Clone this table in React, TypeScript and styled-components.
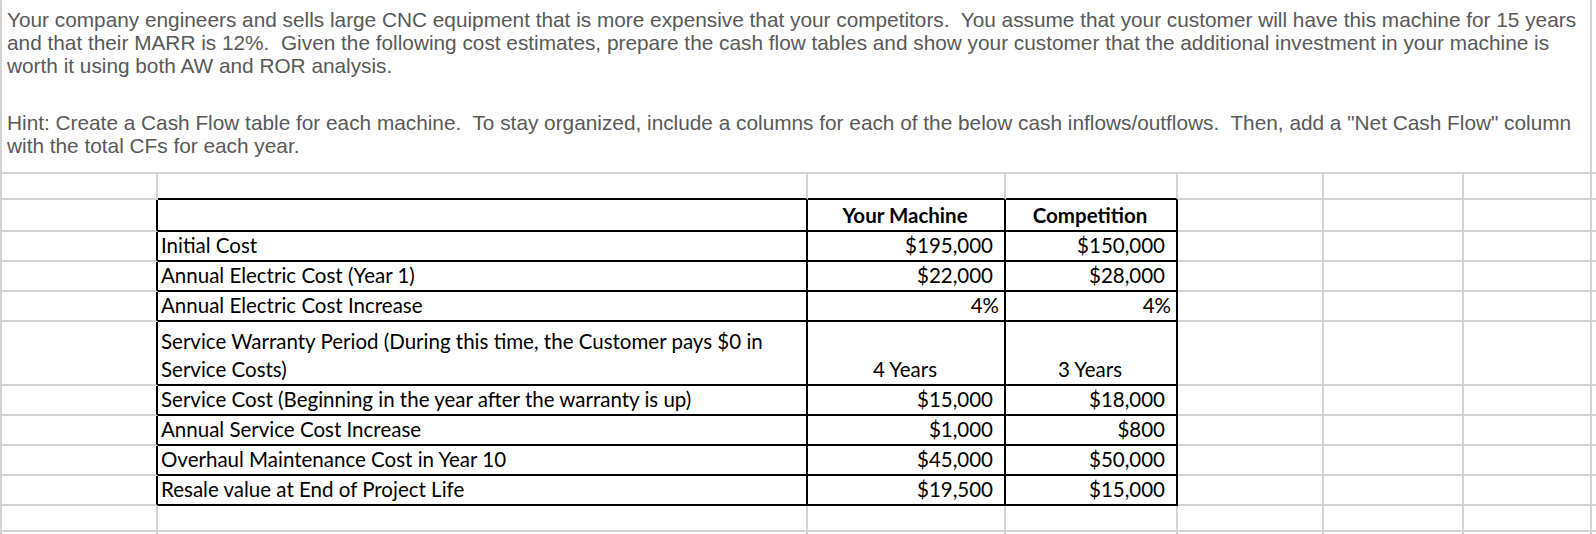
import React from "react";
import styled, { createGlobalStyle } from "styled-components";

const GRID = "#d4d4d4";
const INK = "#000000";

const COLS = [156, 650, 198, 172, 146, 140, 128];
const ROWS = [174, 26, 32, 30, 30, 30, 64, 30, 30, 30, 30, 26, 30];

const GlobalStyle = createGlobalStyle`
  html, body {
    margin: 0;
    padding: 0;
    background: #ffffff;
    overflow: hidden;
  }
`;

const Sheet = styled.div`
  display: grid;
  grid-template-columns: ${COLS.map((w) => `${w}px`).join(" ")} 1fr;
  grid-template-rows: ${ROWS.map((h) => `${h}px`).join(" ")};
  width: 1596px;
  height: 534px;
  overflow: hidden;
  box-sizing: border-box;
  border-left: 2px solid ${GRID};
`;

const Note = styled.div`
  grid-column: 1 / 8;
  box-sizing: border-box;
  border-right: 2px solid ${GRID};
  border-bottom: 2px solid ${GRID};
  padding: 8px 0 0 5px;
  font-family: "Liberation Sans", Arial, sans-serif;
  font-size: 20.8px;
  line-height: 23px;
  color: #595959;
  white-space: pre;
  overflow: hidden;
`;

const Para = styled.p<{ $gap?: number }>`
  margin: ${(p) => p.$gap ?? 0}px 0 0;
`;

type Align = "left" | "right" | "center";

const Cell = styled.div<{
  $right?: boolean;
  $bottom?: boolean;
  $align?: Align;
  $pad?: number;
  $bold?: boolean;
}>`
  box-sizing: border-box;
  border-right: 2px solid ${(p) => (p.$right ? INK : GRID)};
  border-bottom: 2px solid ${(p) => (p.$bottom ? INK : GRID)};
  display: flex;
  align-items: flex-end;
  justify-content: ${(p) =>
    p.$align === "right"
      ? "flex-end"
      : p.$align === "center"
      ? "center"
      : "flex-start"};
  padding: 0 ${(p) => p.$pad ?? 5}px 1px 3px;
  font-family: Lato, "Noto Sans", sans-serif;
  font-size: 20.5px;
  line-height: 28px;
  font-weight: ${(p) => (p.$bold ? 700 : 400)};
  color: #000000;
  white-space: nowrap;
  overflow: hidden;
`;

const Value = styled.span`
  display: block;
`;

type Kind = "head" | "money" | "pct" | "text";

const TABLE: { label: string[]; a: string; b: string; kind: Kind }[] = [
  { label: [], a: "Your Machine", b: "Competition", kind: "head" },
  { label: ["Initial Cost"], a: "$195,000", b: "$150,000", kind: "money" },
  { label: ["Annual Electric Cost (Year 1)"], a: "$22,000", b: "$28,000", kind: "money" },
  { label: ["Annual Electric Cost Increase"], a: "4%", b: "4%", kind: "pct" },
  {
    label: [
      "Service Warranty Period (During this time, the Customer pays $0 in",
      "Service Costs)",
    ],
    a: "4 Years",
    b: "3 Years",
    kind: "text",
  },
  {
    label: ["Service Cost (Beginning in the year after the warranty is up)"],
    a: "$15,000",
    b: "$18,000",
    kind: "money",
  },
  { label: ["Annual Service Cost Increase"], a: "$1,000", b: "$800", kind: "money" },
  { label: ["Overhaul Maintenance Cost in Year 10"], a: "$45,000", b: "$50,000", kind: "money" },
  { label: ["Resale value at End of Project Life"], a: "$19,500", b: "$15,000", kind: "money" },
];

const FIRST_TABLE_ROW = 2;

function valueProps(kind: Kind) {
  switch (kind) {
    case "head":
      return { $align: "center" as Align, $bold: true };
    case "money":
      return { $align: "right" as Align, $pad: 11 };
    case "pct":
      return { $align: "right" as Align, $pad: 5 };
    default:
      return { $align: "center" as Align };
  }
}

function SheetRow({ r }: { r: number }) {
  const t = r - FIRST_TABLE_ROW;
  const inTable = t >= 0 && t < TABLE.length;
  const entry = inTable ? TABLE[t] : null;

  return (
    <>
      {Array.from({ length: COLS.length + 1 }, (_, c) => {
        const right = inTable && c <= 3;
        const bottom = (inTable || r === FIRST_TABLE_ROW - 1) && c >= 1 && c <= 3;
        let content: React.ReactNode = null;
        let extra = {};

        if (entry && c === 1) {
          content = (
            <Value>
              {entry.label.map((line, i) => (
                <React.Fragment key={i}>
                  {i > 0 && <br />}
                  {line}
                </React.Fragment>
              ))}
            </Value>
          );
        } else if (entry && (c === 2 || c === 3)) {
          content = <Value>{c === 2 ? entry.a : entry.b}</Value>;
          extra = valueProps(entry.kind);
        }

        return (
          <Cell key={c} $right={right} $bottom={bottom} {...extra}>
            {content}
          </Cell>
        );
      })}
    </>
  );
}

export default function App() {
  return (
    <>
      <GlobalStyle />
      <Sheet>
        <Note>
          <Para>
            Your company engineers and sells large CNC equipment that is more expensive that your competitors.  You assume that your customer will have this machine for 15 years
            <br />
            and that their MARR is 12%.  Given the following cost estimates, prepare the cash flow tables and show your customer that the additional investment in your machine is
            <br />
            worth it using both AW and ROR analysis.
          </Para>
          <Para $gap={34}>
            Hint: Create a Cash Flow table for each machine.  To stay organized, include a columns for each of the below cash inflows/outflows.  Then, add a "Net Cash Flow" column
            <br />
            with the total CFs for each year.
          </Para>
        </Note>
        <Cell />
        {ROWS.slice(1).map((_, i) => (
          <SheetRow key={i} r={i + 1} />
        ))}
      </Sheet>
    </>
  );
}
